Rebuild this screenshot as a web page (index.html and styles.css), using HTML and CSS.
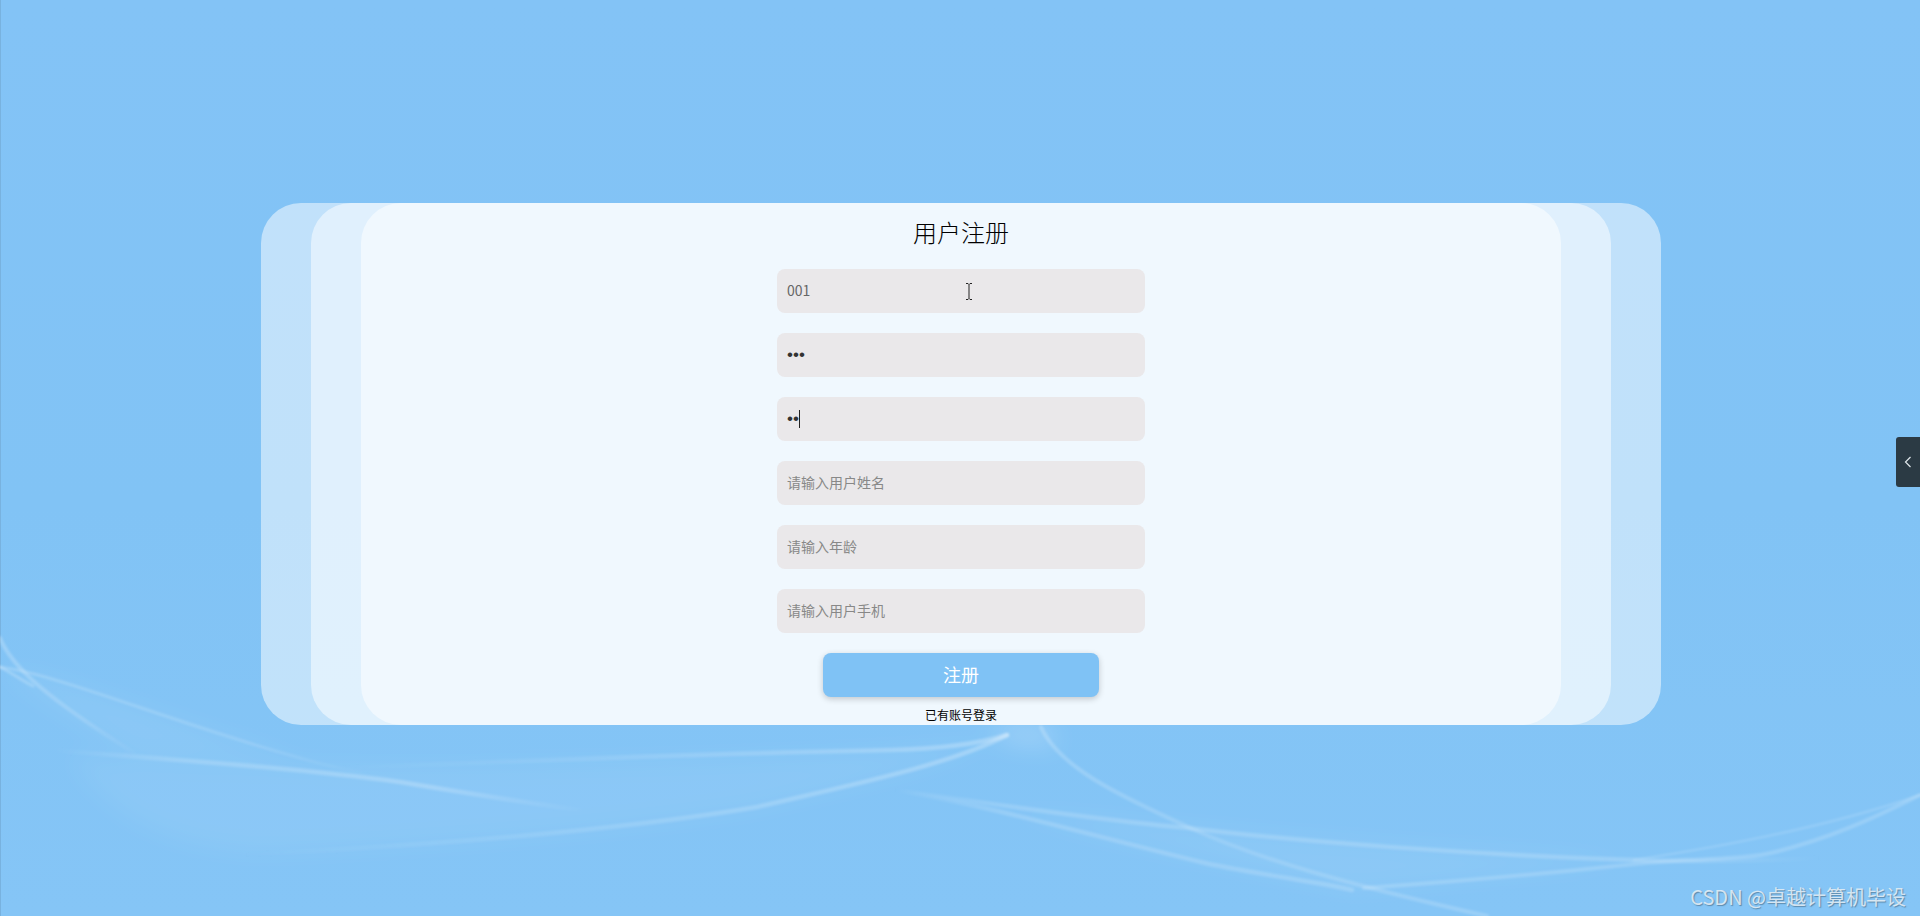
FILE: index.html
```html
<!DOCTYPE html>
<html lang="zh-CN">
<head>
<meta charset="utf-8">
<title>用户注册</title>
<link rel="stylesheet" href="styles.css">
</head>
<body>
<svg class="waves" viewBox="0 0 1920 916" aria-hidden="true">
  <defs>
    <filter id="soft" filterUnits="userSpaceOnUse" x="-20" y="600" width="1960" height="330"><feGaussianBlur stdDeviation="1.3"/></filter>
    <filter id="softer" filterUnits="userSpaceOnUse" x="-40" y="600" width="2000" height="340"><feGaussianBlur stdDeviation="12"/></filter>
    <linearGradient id="fade-a" gradientUnits="userSpaceOnUse" x1="0" y1="0" x2="140" y2="0">
      <stop offset="0" stop-color="#fff" stop-opacity=".22"/><stop offset=".6" stop-color="#fff" stop-opacity=".15"/><stop offset="1" stop-color="#fff" stop-opacity="0"/>
    </linearGradient>
    <linearGradient id="fade-c" gradientUnits="userSpaceOnUse" x1="50" y1="0" x2="590" y2="0">
      <stop offset="0" stop-color="#fff" stop-opacity="0"/><stop offset=".25" stop-color="#fff" stop-opacity=".17"/><stop offset=".7" stop-color="#fff" stop-opacity=".22"/><stop offset="1" stop-color="#fff" stop-opacity="0"/>
    </linearGradient>
    <linearGradient id="fade-d" gradientUnits="userSpaceOnUse" x1="340" y1="0" x2="1007" y2="0">
      <stop offset="0" stop-color="#fff" stop-opacity="0"/><stop offset=".5" stop-color="#fff" stop-opacity=".13"/><stop offset="1" stop-color="#fff" stop-opacity=".26"/>
    </linearGradient>
    <linearGradient id="fade-e" gradientUnits="userSpaceOnUse" x1="240" y1="0" x2="1007" y2="0">
      <stop offset="0" stop-color="#fff" stop-opacity="0"/><stop offset=".45" stop-color="#fff" stop-opacity=".12"/><stop offset="1" stop-color="#fff" stop-opacity=".26"/>
    </linearGradient>
    <linearGradient id="fade-g" gradientUnits="userSpaceOnUse" x1="895" y1="0" x2="1821" y2="0">
      <stop offset="0" stop-color="#fff" stop-opacity="0"/><stop offset=".12" stop-color="#fff" stop-opacity=".16"/><stop offset=".8" stop-color="#fff" stop-opacity=".18"/><stop offset="1" stop-color="#fff" stop-opacity="0"/>
    </linearGradient>
    <linearGradient id="fade-b" gradientUnits="userSpaceOnUse" x1="0" y1="0" x2="370" y2="0">
      <stop offset="0" stop-color="#fff" stop-opacity=".18"/><stop offset=".7" stop-color="#fff" stop-opacity=".13"/><stop offset="1" stop-color="#fff" stop-opacity="0"/>
    </linearGradient>
    <linearGradient id="fade-f" gradientUnits="userSpaceOnUse" x1="1041" y1="0" x2="1487" y2="0">
      <stop offset="0" stop-color="#fff" stop-opacity=".2"/><stop offset=".4" stop-color="#fff" stop-opacity=".13"/><stop offset="1" stop-color="#fff" stop-opacity=".18"/>
    </linearGradient>
  </defs>
  <g filter="url(#softer)">
    <path class="glow" d="M70 756C300 768 520 770 891 752C950 748 985 742 1007 735C950 765 850 785 757 807C650 825 480 843 260 852C170 846 110 820 70 756Z"/>
    <path class="glow" d="M1000 808C1100 820 1300 842 1634 860C1540 872 1440 880 1352 890C1260 870 1100 838 1000 808Z"/>
    <path class="glow" d="M0 667C60 675 170 722 300 758L133 752C80 725 30 695 0 667Z"/>
    <path class="glow-strong" d="M990 726L1045 726L1058 746L1008 742Z"/>
  </g>
  <g class="strokes" filter="url(#soft)">
    <path class="band" stroke="url(#fade-a)" d="M0 638C12 668 50 700 133 752"/>
    <path class="thin" stroke="url(#fade-a)" d="M0 667C15 675 25 682 33 686"/>
    <path class="thin" stroke="url(#fade-b)" d="M0 667C60 675 170 722 300 758C330 767 350 770 367 773"/>
    <path class="wide" stroke="url(#fade-c)" d="M50 750C150 758 300 768 400 782C460 792 520 802 580 810"/>
    <path class="wide" stroke="url(#fade-d)" d="M340 768C500 762 650 755 891 750C930 749 975 745 1007 735"/>
    <path class="wide" stroke="url(#fade-e)" d="M1007 735C950 765 850 785 757 807C650 825 480 843 240 855"/>
    <path class="band" stroke="url(#fade-f)" d="M1041 727C1060 770 1130 800 1188 827C1260 860 1350 885 1487 916"/>
    <path class="wide" stroke="url(#fade-g)" d="M895 790C1000 805 1100 820 1188 828C1300 842 1480 855 1634 860C1700 862 1780 860 1821 858"/>
    <path class="wide" stroke="url(#fade-g)" d="M895 790C1000 808 1100 838 1205 863C1260 875 1320 882 1352 890"/>
    <path class="band-solid" d="M1364 888C1480 880 1580 870 1645 863C1700 858 1745 860 1775 852C1830 838 1870 820 1920 795"/>
    <path class="thin-band" d="M1634 860C1700 850 1820 830 1920 795"/>
  </g>
</svg>

<main class="card">
  <h2 class="title">用户注册</h2>
  <form class="form">
    <div class="field"><input class="input" type="text" value="001"></div>
    <div class="field"><input class="input" type="password" value="123"></div>
    <div class="field"><input class="input" type="password" value="12"><span class="caret"></span></div>
    <div class="field"><input class="input" type="text" placeholder="请输入用户姓名"></div>
    <div class="field"><input class="input" type="text" placeholder="请输入年龄"></div>
    <div class="field"><input class="input" type="text" placeholder="请输入用户手机"></div>
    <button class="submit" type="button">注册</button>
    <a class="login" href="#">已有账号登录</a>
  </form>
</main>

<svg class="ibeam" viewBox="0 0 8 17" aria-hidden="true"><path d="M1 .5h2l1 1 1-1h2M4 1.5v14M1 16.5h2l1-1 1 1h2"/></svg>

<aside class="side-tab">
  <svg viewBox="0 0 8 12" aria-hidden="true"><path d="M6.5 1 1.5 6l5 5"/></svg>
</aside>

<div class="watermark">CSDN @卓越计算机毕设</div>
</body>
</html>
```
FILE: styles.css
```css
* { box-sizing: border-box; }

html, body {
  margin: 0;
  height: 916px;
  overflow: hidden;
}

body {
  position: relative;
  display: flex;
  flex-direction: column;
  align-items: center;
  padding: 203px 0 0 2px;
  background: linear-gradient(#83c3f6, #81c3f5 55%, #85c5f6);
  font-family: "Noto Sans CJK SC", "Noto Sans", sans-serif;
  color: #000;
}

body::before {
  content: "";
  position: absolute;
  left: 0;
  top: 0;
  bottom: 0;
  width: 1px;
  background: #78b2df;
}

.waves {
  position: absolute;
  left: 0;
  top: 0;
  width: 1920px;
  height: 916px;
}

.glow { fill: rgba(255, 255, 255, 0.06); }
.glow-strong { fill: rgba(255, 255, 255, 0.24); }

.strokes path {
  fill: none;
  stroke-linecap: round;
}

.band { stroke-width: 4; }
.band-solid { stroke: rgba(255, 255, 255, 0.17); stroke-width: 4; }
.wide { stroke-width: 4.5; }
.thin { stroke-width: 3; }
.thin-band { stroke: rgba(255, 255, 255, 0.13); stroke-width: 2.5; }

.card {
  position: relative;
  width: 1200px;
  height: 522px;
  padding-top: 11px;
  border-radius: 40px;
  background: #f0f8fe;
  box-shadow:
    -50px 0 0 rgba(255, 255, 255, 0.5),
    50px 0 0 rgba(255, 255, 255, 0.5),
    -100px 0 0 rgba(255, 255, 255, 0.5),
    100px 0 0 rgba(255, 255, 255, 0.5);
}

.title {
  margin: 0;
  height: 36px;
  font-size: 24px;
  line-height: 36px;
  font-weight: 300;
  text-align: center;
}

.form {
  display: flex;
  flex-direction: column;
  align-items: center;
  gap: 20px;
  margin-top: 19px;
}

.field {
  position: relative;
  width: 368px;
  height: 44px;
}

.input {
  display: block;
  width: 100%;
  height: 100%;
  padding: 0 10px 2px;
  border: 0;
  border-radius: 8px;
  outline: 0;
  background: #eae8ea;
  color: #666;
  font-family: inherit;
  font-size: 14px;
}

.input[type="password"] {
  padding-bottom: 0;
  color: #333;
  font-family: "Liberation Sans", sans-serif;
  font-size: 17px;
}

.input::placeholder { color: #888; opacity: 1; }

.caret {
  position: absolute;
  left: 22px;
  top: 13px;
  width: 1px;
  height: 18px;
  background: #222;
}

.submit {
  width: 276px;
  height: 44px;
  padding: 0 0 2px;
  border: 0;
  border-radius: 8px;
  background: #7fc2f5;
  box-shadow: 0 2px 6px rgba(0, 0, 0, 0.2);
  color: #fff;
  font-family: inherit;
  font-size: 18px;
}

.login {
  margin-top: -10px;
  font-size: 12px;
  line-height: 16px;
  color: #000;
  text-decoration: none;
}

.ibeam {
  position: absolute;
  left: 965px;
  top: 283px;
  width: 8px;
  height: 17px;
  fill: none;
  stroke: #222;
  stroke-width: 1;
}

.side-tab {
  position: fixed;
  right: 0;
  top: 437px;
  display: flex;
  align-items: center;
  justify-content: center;
  width: 24px;
  height: 50px;
  border-radius: 3px 0 0 3px;
  background: #2b3a44;
}

.side-tab svg {
  width: 8px;
  height: 12px;
  fill: none;
  stroke: #dfe6ea;
  stroke-width: 1.2;
}

.watermark {
  position: absolute;
  right: 14px;
  top: 883px;
  font-size: 20px;
  line-height: 28px;
  white-space: nowrap;
  color: rgba(232, 240, 246, 0.85);
  text-shadow: 1px 1px 1px rgba(60, 90, 110, 0.55);
}
```
